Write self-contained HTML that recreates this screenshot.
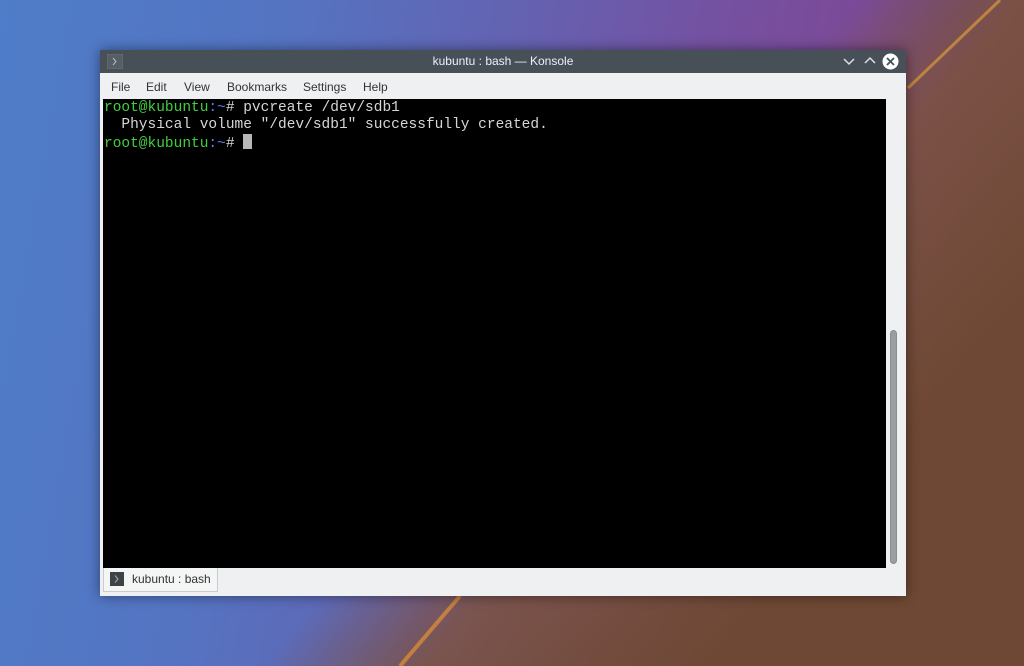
<!DOCTYPE html>
<html><head><meta charset="utf-8"><style>
*{margin:0;padding:0;box-sizing:border-box}
html,body{width:1024px;height:666px;overflow:hidden}
body{position:relative;font-family:"Liberation Sans",sans-serif;
background:
linear-gradient(132deg, rgba(120,78,60,0) 53%, rgba(125,82,62,0.85) 63%, rgba(110,72,50,0.97) 80%),
linear-gradient(100deg, #4f7dc8 0%, #5474c2 25%, #6363b2 45%, #7452a2 62%, #7b4a98 75%, #6f4a70 90%);
}
.win{position:absolute;left:100px;top:50px;width:806px;height:546px;background:#eff0f1;box-shadow:0 0 12px rgba(0,0,0,.45)}
.tb{position:absolute;left:0;top:0;width:806px;height:23px;background:#475057;color:#eef;font-size:12px;text-align:center;line-height:23px}
.menu{position:absolute;left:0;top:23px;height:26px;font-size:12px;color:#333;line-height:28px}
.menu span{position:absolute;white-space:nowrap}
.term{position:absolute;left:3px;top:49px;width:783px;height:469px;background:#000;font-family:"Liberation Mono",monospace;font-size:14.5px;line-height:17px;color:#d6d6d6;padding:1px 0 0 1px;white-space:pre}
.g{color:#3fcf3f}.b{color:#5a7df0}
.cur{display:inline-block;width:9px;height:15px;background:#b8b8b8;vertical-align:-2px}
.sb{position:absolute;left:790px;top:280px;width:7px;height:234px;border-radius:4px;background:#9a9ea1;border:1px solid #8a8e91}
.tab{position:absolute;left:3px;top:518px;width:115px;height:24px;background:#f4f5f5;border:1px solid #c9cccf;border-top:none;font-size:12px;color:#333;line-height:23px;padding-left:28px}
</style></head><body>
<svg style="position:absolute;left:0;top:0" width="1024" height="666">
<line x1="1000" y1="0" x2="908" y2="88" stroke="#d0903a" stroke-width="3" opacity=".8"/>
<line x1="460" y1="596" x2="400" y2="666" stroke="#d88a3a" stroke-width="4" opacity=".8"/>
</svg>
<div class="win">
<div class="tb">kubuntu : bash — Konsole
<svg style="position:absolute;left:7px;top:4px" width="16" height="15"><rect width="16" height="15" fill="#555e65" stroke="#6a7379"/><path d="M6 4l3 3.5L6 11" stroke="#bbb" fill="none"/></svg>
<svg style="position:absolute;left:743px;top:7px" width="12" height="9"><path d="M1 2l5 5 5-5" stroke="#dde" stroke-width="1.5" fill="none"/></svg>
<svg style="position:absolute;left:764px;top:6px" width="12" height="9"><path d="M1 7l5-5 5 5" stroke="#dde" stroke-width="1.5" fill="none"/></svg>
<svg style="position:absolute;left:782px;top:3px" width="17" height="17"><circle cx="8.5" cy="8.5" r="8" fill="#fff"/><path d="M5 5l7 7M12 5l-7 7" stroke="#475057" stroke-width="1.8"/></svg>
</div>
<div class="menu">
<span style="left:11px">File</span><span style="left:46px">Edit</span><span style="left:84px">View</span><span style="left:127px">Bookmarks</span><span style="left:203px">Settings</span><span style="left:263px">Help</span>
</div>
<div class="term"><span class="g">root@kubuntu</span><span class="b">:~</span># pvcreate /dev/sdb1
  Physical volume "/dev/sdb1" successfully created.
<span class="g">root@kubuntu</span><span class="b">:~</span># <span class="cur"></span></div>
<div class="sb"></div>
<div class="tab"><svg style="position:absolute;left:6px;top:4px" width="14" height="14"><rect width="14" height="14" fill="#3d4448"/><path d="M5 3.5l3 3.5-3 3.5" stroke="#aaa" fill="none"/></svg>kubuntu : bash</div>
</div>
</body></html>
